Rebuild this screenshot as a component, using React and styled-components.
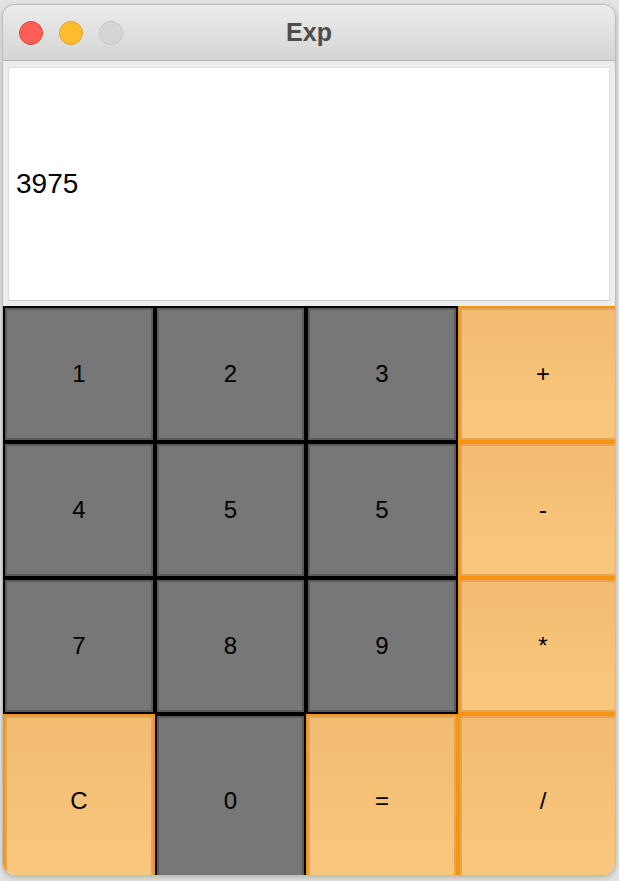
import React from "react";
import styled, { createGlobalStyle } from "styled-components";

const GlobalStyle = createGlobalStyle`
  html, body {
    margin: 0;
    padding: 0;
    background: #e3e3e3;
    font-family: "Liberation Sans", Arial, sans-serif;
  }
`;

const keys = [
  { label: "1", kind: "num" },
  { label: "2", kind: "num" },
  { label: "3", kind: "num" },
  { label: "+", kind: "op" },
  { label: "4", kind: "num" },
  { label: "5", kind: "num" },
  { label: "5", kind: "num" },
  { label: "-", kind: "op" },
  { label: "7", kind: "num" },
  { label: "8", kind: "num" },
  { label: "9", kind: "num" },
  { label: "*", kind: "op" },
  { label: "C", kind: "op" },
  { label: "0", kind: "num" },
  { label: "=", kind: "op" },
  { label: "/", kind: "op" },
];

function App() {
  return (
    <>
      <GlobalStyle />
      <Page>
        <Window>
          <TitleBar>
            <Lights>
              <Light color="#fe5f57" edge="#e0443e" />
              <Light color="#febc2e" edge="#dea123" />
              <Light color="#d6d6d6" edge="#c2c2c2" />
            </Lights>
            <Title>Exp</Title>
          </TitleBar>
          <Content>
            <DisplayWrap>
              <Display>3975</Display>
            </DisplayWrap>
            <Keypad>
              {keys.map((k, i) => (
                <Key key={i} kind={k.kind}>
                  {k.label}
                </Key>
              ))}
            </Keypad>
          </Content>
        </Window>
      </Page>
    </>
  );
}

export default App;

const Page = styled.div`
  width: 619px;
  height: 881px;
  padding: 5px 4px 6px 3px;
  box-sizing: border-box;
`;

const Window = styled.div`
  width: 612px;
  height: 870px;
  border-radius: 12px;
  overflow: hidden;
  display: flex;
  flex-direction: column;
  background: #ececec;
  box-shadow: 0 0 0 1px #bdbdbd, 0 2px 6px rgba(0, 0, 0, 0.25);
`;

const TitleBar = styled.div`
  position: relative;
  height: 55px;
  flex-shrink: 0;
  display: flex;
  align-items: center;
  justify-content: center;
  background: linear-gradient(#ececec, #d5d5d5);
  border-bottom: 1px solid #b4b4b4;
`;

const Lights = styled.div`
  position: absolute;
  left: 16px;
  top: 16px;
  display: flex;
  gap: 16px;
`;

const Light = styled.span`
  width: 24px;
  height: 24px;
  border-radius: 50%;
  box-sizing: border-box;
  background: ${(p) => p.color};
  border: 1px solid ${(p) => p.edge};
`;

const Title = styled.div`
  font-family: "Liberation Sans", Arial, sans-serif;
  font-weight: bold;
  font-size: 25px;
  color: #4d4d4d;
`;

const Content = styled.div`
  flex: 1;
  display: flex;
  flex-direction: column;
  min-height: 0;
`;

const DisplayWrap = styled.div`
  padding: 6px 5px 5px 5px;
  flex-shrink: 0;
`;

const Display = styled.div`
  height: 234px;
  box-sizing: border-box;
  background: #ffffff;
  border: 1px solid #dcdcdc;
  border-bottom-color: #c4c4c4;
  display: flex;
  align-items: center;
  padding-left: 7px;
  font-size: 28px;
  color: #000;
`;

const Keypad = styled.div`
  display: grid;
  grid-template-columns: 152px 151px 152px 170px;
  grid-template-rows: 136px 136px 136px 174px;
  flex-shrink: 0;
`;

const Key = styled.div`
  box-sizing: border-box;
  display: flex;
  align-items: center;
  justify-content: center;
  font-family: "Liberation Sans", Arial, sans-serif;
  font-size: 24px;
  color: #000;
  border: 2px solid ${(p) => (p.kind === "op" ? "#f7940b" : "#000000")};
  box-shadow: inset 0 0 0 2px
    ${(p) => (p.kind === "op" ? "#e3a557" : "#5b5b5b")};
  background: ${(p) =>
    p.kind === "op"
      ? "linear-gradient(#f1bc72, #f9c87e)"
      : "#777777"};
`;
